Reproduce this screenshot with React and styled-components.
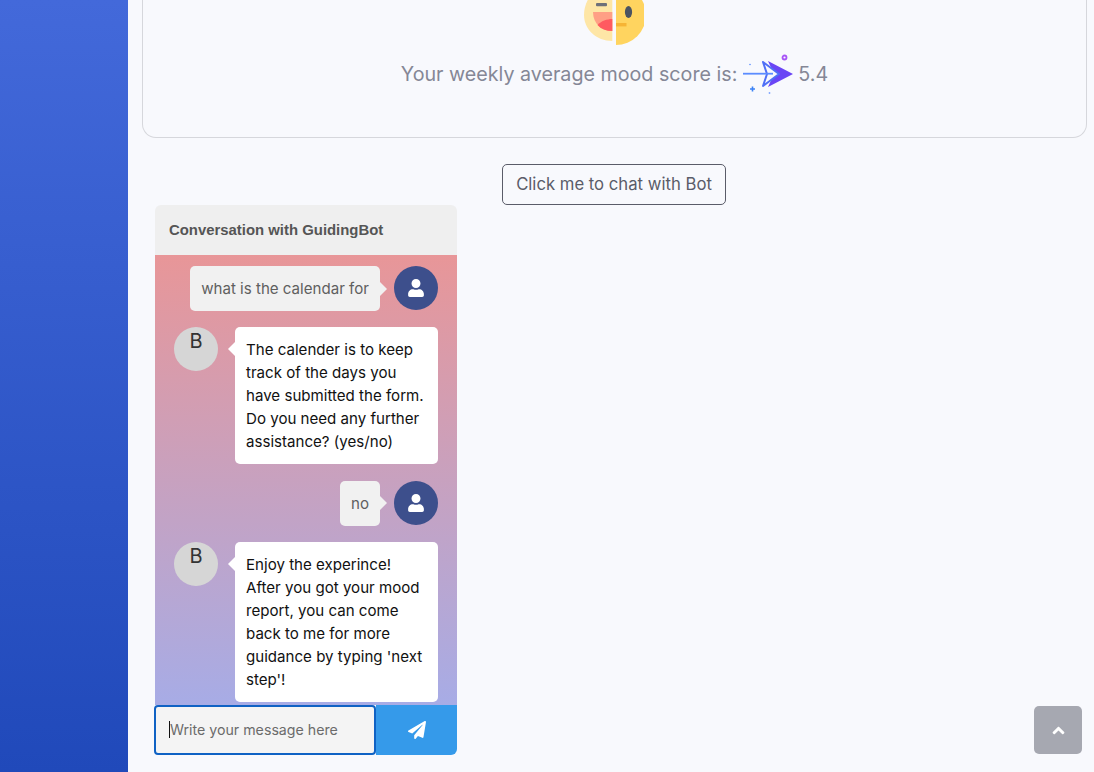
import React from "react";
import styled, { createGlobalStyle } from "styled-components";
import { FaUser, FaPaperPlane, FaAngleUp } from "react-icons/fa";

const GlobalStyle = createGlobalStyle`
  html, body {
    margin: 0;
    height: 100%;
    overflow: hidden;
    background: #f8f9fd;
    font-family: Inter, "Liberation Sans", sans-serif;
  }
`;

const Page = styled.div`
  display: flex;
  height: 772px;
  overflow: hidden;
`;

const Sidebar = styled.aside`
  width: 128px;
  flex: none;
  background: linear-gradient(180deg, #4369da 0%, #2049ba 100%);
`;

const Main = styled.main`
  flex: 1;
  display: flex;
  flex-direction: column;
  padding: 0 7px 0 14px;
`;

const MoodCard = styled.section`
  height: 138px;
  box-sizing: border-box;
  display: flex;
  flex-direction: column;
  align-items: center;
  border: 1px solid #d6d7dc;
  border-top: none;
  border-radius: 0 0 14px 14px;
`;

const Face = styled.svg`
  display: block;
  width: 60px;
  height: 45px;
  flex: none;
  margin-right: 1px;
`;

const Score = styled.div`
  display: flex;
  align-items: center;
  margin-top: 4px;
  font-size: 19.7px;
  color: #858796;
`;

const ArrowMark = styled.svg`
  display: block;
  width: 55px;
  height: 50px;
  margin: 0 2px 0 4px;
`;

const ChatToggle = styled.button`
  align-self: center;
  margin: 26px 1px 0 0;
  height: 41px;
  width: 224px;
  padding: 0 0 2px;
  background: transparent;
  border: 1px solid #5a5c69;
  border-radius: 5px;
  color: #5a5c69;
  font-family: inherit;
  font-size: 16.7px;
`;

const Chat = styled.div`
  width: 302px;
  margin-left: 13px;
  display: flex;
  flex-direction: column;
`;

const ChatHeader = styled.header`
  height: 50px;
  display: flex;
  align-items: center;
  padding-left: 14px;
  background: #efefef;
  border-radius: 6px 6px 0 0;
  font-family: "Liberation Sans", Arial, sans-serif;
  font-size: 14.9px;
  font-weight: 700;
  color: #555;
`;

const Messages = styled.div`
  height: 450px;
  box-sizing: border-box;
  display: flex;
  flex-direction: column;
  gap: 16.4px;
  padding: 11px 19px 0;
  background: linear-gradient(180deg, #e89698 0%, #a7ace6 100%);
  overflow: hidden;
`;

const Row = styled.div`
  display: flex;
  justify-content: ${(p) => (p.$mine ? "flex-end" : "space-between")};
  align-items: flex-start;
  gap: 14px;
`;

const Avatar = styled.div`
  width: 44px;
  height: 44px;
  flex: none;
  border-radius: 50%;
  display: flex;
  justify-content: center;
  font-size: 20px;
  line-height: 28px;
  color: ${(p) => (p.$mine ? "#fff" : "#333")};
  background: ${(p) => (p.$mine ? "#3d4f8c" : "#d6d6d6")};
  align-items: ${(p) => (p.$mine ? "center" : "flex-start")};
  svg {
    width: 16px;
    height: 18px;
  }
`;

const Bubble = styled.div`
  position: relative;
  box-sizing: border-box;
  width: ${(p) => (p.$mine ? "auto" : "203px")};
  padding: 11px;
  border-radius: 5px;
  font-size: 15.1px;
  line-height: 23px;
  color: ${(p) => (p.$mine ? "#5f5f5f" : "#111")};
  background: ${(p) => (p.$mine ? "#f1f1f1" : "#fff")};
  &::after {
    content: "";
    position: absolute;
    top: ${(p) => (p.$mine ? "50%" : "22px")};
    ${(p) => (p.$mine ? "right: -7px;" : "left: -7px;")}
    margin-top: -7px;
    border-style: solid;
    border-width: ${(p) => (p.$mine ? "7px 0 7px 7px" : "7px 7px 7px 0")};
    border-color: transparent;
    ${(p) =>
      p.$mine ? "border-left-color: #f1f1f1;" : "border-right-color: #fff;"}
  }
`;

const Composer = styled.form`
  display: flex;
  height: 50px;
  margin: 0;
`;

const InputWrap = styled.div`
  position: relative;
  width: 222px;
  margin-left: -1px;
  &::before {
    content: "";
    position: absolute;
    left: 15px;
    top: 16px;
    width: 1px;
    height: 17px;
    background: #111;
  }
`;

const Input = styled.input`
  width: 100%;
  height: 100%;
  box-sizing: border-box;
  padding: 0 14px 2px;
  border: 2px solid #0f62c4;
  border-radius: 4px;
  outline: none;
  background: #f4f4f4;
  caret-color: transparent;
  font-family: inherit;
  font-size: 14.2px;
  &::placeholder {
    color: #6b6b6b;
    opacity: 1;
  }
`;

const SendButton = styled.button`
  flex: 1;
  padding: 0;
  border: none;
  border-radius: 0 0 6px 0;
  background: #359aea;
  color: #fff;
  display: flex;
  align-items: center;
  justify-content: center;
  svg {
    width: 18px;
    height: 18px;
  }
`;

const ScrollTop = styled.a`
  position: fixed;
  right: 12px;
  bottom: 18px;
  width: 48px;
  height: 48px;
  border-radius: 5px;
  background: #a6a8b1;
  color: #fff;
  display: flex;
  align-items: center;
  justify-content: center;
  svg {
    width: 19px;
    height: 19px;
  }
`;

const conversation = [
  { mine: true, text: "what is the calendar for" },
  {
    mine: false,
    text: "The calender is to keep track of the days you have submitted the form. Do you need any further assistance? (yes/no)",
  },
  { mine: true, text: "no" },
  {
    mine: false,
    text: "Enjoy the experince! After you got your mood report, you can come back to me for more guidance by typing 'next step'!",
  },
];

function MoodFace() {
  return (
    <Face viewBox="584 0 60 45">
      <path
        d="M612.3 41C596 41 584 29 584 15C584-1 596-15 612.3-15Z"
        fill="#fee6a6"
      />
      <path d="M616-15A30 30 0 0 1 616 45Z" fill="#ffd45f" />
      <rect x="596" y="3" width="11" height="3.2" rx="1" fill="#6e7079" />
      <path d="M593 12H612.3V31C602 31 593 24 593 12Z" fill="#ff9f85" />
      <path
        d="M597.5 25C601 21 607 19 612.3 19V31C606 31 601 29 597.5 25Z"
        fill="#ff5a60"
      />
      <ellipse cx="628.5" cy="12" rx="3.6" ry="6" fill="#4b5361" />
      <rect x="616" y="23" width="10.5" height="3.4" fill="#f6b434" />
    </Face>
  );
}

function MoodArrow() {
  return (
    <ArrowMark viewBox="0 0 55 50">
      <path d="M27 12L52 25L27 38L33 25Z" fill="#6a45f5" />
      <path
        d="M22 13L38 25L22 37L26 25Z"
        fill="#f8f9fd"
        stroke="#4f6ff6"
        strokeWidth="2"
        strokeLinejoin="round"
      />
      <path d="M2 24.7H32" stroke="#5b8cff" strokeWidth="1.8" />
      <circle cx="43.5" cy="8.5" r="2" fill="none" stroke="#a855f7" strokeWidth="1.8" />
      <path d="M11.5 37.5V42.5M9 40H14" stroke="#3b82f6" strokeWidth="1.6" />
      <circle cx="9" cy="15.5" r="0.8" fill="#5b8cff" />
      <circle cx="28.5" cy="44" r="0.9" fill="#7fa6ff" />
    </ArrowMark>
  );
}

export default function App() {
  return (
    <Page>
      <GlobalStyle />
      <Sidebar />
      <Main>
        <MoodCard>
          <MoodFace />
          <Score>
            Your weekly average mood score is:
            <MoodArrow />
            5.4
          </Score>
        </MoodCard>
        <ChatToggle type="button">Click me to chat with Bot</ChatToggle>
        <Chat>
          <ChatHeader>Conversation with GuidingBot</ChatHeader>
          <Messages>
            {conversation.map((m, i) =>
              m.mine ? (
                <Row key={i} $mine>
                  <Bubble $mine>{m.text}</Bubble>
                  <Avatar $mine>
                    <FaUser />
                  </Avatar>
                </Row>
              ) : (
                <Row key={i}>
                  <Avatar>B</Avatar>
                  <Bubble>{m.text}</Bubble>
                </Row>
              )
            )}
          </Messages>
          <Composer>
            <InputWrap>
              <Input placeholder="Write your message here" />
            </InputWrap>
            <SendButton type="button" aria-label="Send">
              <FaPaperPlane />
            </SendButton>
          </Composer>
        </Chat>
      </Main>
      <ScrollTop href="#top" aria-label="Back to top">
        <FaAngleUp />
      </ScrollTop>
    </Page>
  );
}
